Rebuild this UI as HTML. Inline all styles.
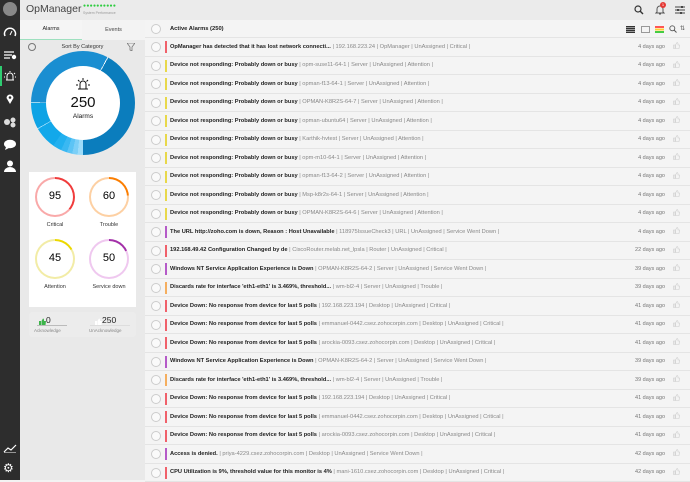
<!DOCTYPE html>
<html><head><meta charset="utf-8"><style>
*{box-sizing:border-box;margin:0;padding:0}
body{width:690px;height:480px;overflow:hidden;font-family:"Liberation Sans",sans-serif;background:#f3f3f3;position:relative}
.sb{position:absolute;left:0;top:0;width:20px;height:480px;background:#2d2d2d}
.top{position:absolute;left:20px;top:0;width:670px;height:20px;background:#ebebeb}
.lp{position:absolute;left:20px;top:20px;width:125px;height:460px;background:#e9e9e9}
.main{position:absolute;left:145px;top:20px;width:545px;height:460px;background:#f4f4f4}
.row{position:absolute;left:0;width:545px;height:18.6px;border-bottom:1px solid #e4e4e4;font-size:5.7px;color:#888}
.row .ck{position:absolute;left:6px;top:4px;width:10px;height:10px;border:1px solid #ccc;border-radius:50%;background:#fafafa}
.row .bar{position:absolute;left:20px;top:3px;width:2px;height:12px}
.row .t{position:absolute;left:25px;top:5.5px;white-space:nowrap}
.row .t b{color:#222}
.row .d{position:absolute;right:25px;top:5.5px;color:#777;font-size:5.5px}
.row .th{position:absolute;right:10px;top:4px}
.sev{position:absolute;left:9px;top:152px;width:107px;height:135px;background:#fff}
.c{position:absolute;width:40px;height:40px}
.lbl{position:absolute;font-size:5.5px;color:#333;width:60px;text-align:center}
</style></head><body>
<div class="sb">
<div style="position:absolute;left:3px;top:2px;width:14px;height:14px;border-radius:50%;background:#888"></div>
<svg style="position:absolute;left:3px;top:27px" width="14" height="10" viewBox="0 0 14 10"><path d="M2 9A5.5 5.5 0 1 1 12 9" fill="none" stroke="#fff" stroke-width="1.5"/><path d="M7 8L9 4" stroke="#fff"/></svg>
<svg style="position:absolute;left:3px;top:50px" width="14" height="10"><path d="M1 2H11M1 5H9M1 8H7" stroke="#fff" stroke-width="1.2"/><circle cx="11" cy="7" r="2.2" fill="#fff"/></svg>
<div style="position:absolute;left:0;top:66px;width:2px;height:20px;background:#2ecc71"></div>
<svg style="position:absolute;left:3px;top:70px" width="14" height="12"><path d="M4 10V6a3 3 0 0 1 6 0v4H3h8" fill="none" stroke="#fff" stroke-width="1"/><path d="M7 1V2M2 3L3 4M12 3L11 4M1 7H2M12 7H13" stroke="#fff"/></svg>
<svg style="position:absolute;left:5px;top:93px" width="10" height="12"><path d="M5 11L1.5 5A3.5 3.5 0 1 1 8.5 5Z" fill="#fff"/><circle cx="5" cy="4.5" r="1.3" fill="#2d2d2d"/></svg>
<svg style="position:absolute;left:3px;top:116px" width="14" height="12"><circle cx="4" cy="6" r="3" fill="#ddd"/><circle cx="10" cy="4" r="2.5" fill="#ddd"/><circle cx="10" cy="9" r="2.5" fill="#ddd"/></svg>
<svg style="position:absolute;left:3px;top:139px" width="14" height="11"><ellipse cx="7" cy="5" rx="6" ry="4.2" fill="#fff"/><path d="M3 8L2 11L6 9Z" fill="#fff"/></svg>
<svg style="position:absolute;left:4px;top:160px" width="12" height="12"><circle cx="6" cy="3.5" r="3" fill="#fff"/><path d="M0 12a6 5 0 0 1 12 0Z" fill="#fff"/></svg>
<svg style="position:absolute;left:3px;top:443px" width="14" height="10"><path d="M1 9L5 5L8 7L13 2" fill="none" stroke="#fff" stroke-width="1.2"/><path d="M1 10H13" stroke="#fff"/></svg>
<div style="position:absolute;left:3px;top:462px;color:#fff;font-size:12px;line-height:12px">⚙</div>
</div>
<div class="top">
<div style="position:absolute;left:6px;top:3px;font-size:10.5px;color:#444">OpManager</div>
<div style="position:absolute;left:63px;top:3px;font-size:5px;color:#2ecc40;letter-spacing:0.3px">●●●●●●●●●●</div>
<div style="position:absolute;left:63px;top:11px;font-size:3.5px;color:#999">System Performance</div>
<svg style="position:absolute;left:614px;top:5px" width="10" height="10"><circle cx="4" cy="4" r="3" fill="none" stroke="#333" stroke-width="1.2"/><path d="M6 6L9 9" stroke="#333" stroke-width="1.4"/></svg>
<svg style="position:absolute;left:635px;top:4px" width="10" height="11"><path d="M2 8V5a3 3 0 0 1 6 0v3l1 1H1Z" fill="none" stroke="#555"/><path d="M4 10H6" stroke="#555"/></svg>
<div style="position:absolute;left:640px;top:2px;width:6px;height:6px;border-radius:50%;background:#e53935;color:#fff;font-size:4px;text-align:center;line-height:6px">1</div>
<svg style="position:absolute;left:655px;top:5px" width="10" height="10"><path d="M0 2H10M0 5H10M0 8H10" stroke="#444"/><rect x="6" y="1" width="2" height="2" fill="#444"/><rect x="2" y="4" width="2" height="2" fill="#444"/><rect x="5" y="7" width="2" height="2" fill="#444"/></svg>
</div>
<div class="lp">
<div style="position:absolute;left:0;top:0;width:62px;height:20px;background:#f5f5f5;border-bottom:1.5px solid #9ee0bf;font-size:5.5px;text-align:center;line-height:19px;color:#222">Alarms</div>
<div style="position:absolute;left:62px;top:0;width:63px;height:20px;background:#f3f3f3;font-size:5.5px;text-align:center;line-height:20px;color:#444">Events</div>
<div style="position:absolute;left:8px;top:23px;width:8px;height:8px;border:1px solid #777;border-radius:50%"></div>
<div style="position:absolute;left:0;top:24px;width:125px;text-align:center;font-size:5.5px;color:#333">Sort By Category</div>
<svg style="position:absolute;left:107px;top:23px" width="8" height="8"><path d="M0 0H8L5 4V8L3 7V4Z" fill="none" stroke="#777" stroke-width=".8"/></svg>
<div style="position:absolute;left:11px;top:31px;width:104px;height:104px;border-radius:50%;background:conic-gradient(#1a8ed1 0 28deg,#fff 28deg 29deg,#0b7dbd 29deg 180deg,#9ddcfa 180deg 186deg,#7ccff7 186deg 192deg,#5cc4f5 192deg 198deg,#3ab8f2 198deg 205deg,#22b0ef 205deg 215deg,#12a8ea 215deg 240deg,#9ddcfa 240deg 241deg,#0ea3e5 241deg 270deg,#a0d8f0 270deg 271deg,#1a8ed1 271deg 360deg)"></div>
<div style="position:absolute;left:26px;top:46px;width:74px;height:74px;border-radius:50%;background:#fff"></div>
<svg style="position:absolute;left:55px;top:57px" width="16" height="14"><path d="M5 12V7a3 3 0 0 1 6 0v5M3 12H13" fill="none" stroke="#111" stroke-width="1"/><path d="M8 1V3M3 3L4.5 4.5M13 3L11.5 4.5M1 8H3M13 8H15" stroke="#111"/></svg>
<div style="position:absolute;left:26px;top:74px;width:74px;text-align:center;font-size:15px;color:#111">250</div>
<div style="position:absolute;left:26px;top:93px;width:74px;text-align:center;font-size:6.5px;color:#111">Alarms</div>
<div class="sev">
<div class="c" style="left:6px;top:5px;border-radius:50%;background:conic-gradient(#f03c3c 0 130deg,#f9a9a9 130deg)"></div><div class="c" style="left:8px;top:7px;width:36px;height:36px;border-radius:50%;background:#fff"></div>
<div style="position:absolute;left:6px;top:18px;width:40px;text-align:center;font-size:11px">95</div><div class="lbl" style="left:-4px;top:50px">Critical</div>
<div class="c" style="left:60px;top:5px;border-radius:50%;background:conic-gradient(#fb7d00 0 85deg,#fdd0a3 85deg)"></div><div class="c" style="left:62px;top:7px;width:36px;height:36px;border-radius:50%;background:#fff"></div>
<div style="position:absolute;left:60px;top:18px;width:40px;text-align:center;font-size:11px">60</div><div class="lbl" style="left:50px;top:50px">Trouble</div>
<div class="c" style="left:6px;top:67px;border-radius:50%;background:conic-gradient(#ecd800 0 60deg,#f2eca6 60deg)"></div><div class="c" style="left:8px;top:69px;width:36px;height:36px;border-radius:50%;background:#fff"></div>
<div style="position:absolute;left:6px;top:80px;width:40px;text-align:center;font-size:11px">45</div><div class="lbl" style="left:-4px;top:112px">Attention</div>
<div class="c" style="left:60px;top:67px;border-radius:50%;background:conic-gradient(#a330a8 0 65deg,#efc8ef 65deg)"></div><div class="c" style="left:62px;top:69px;width:36px;height:36px;border-radius:50%;background:#fff"></div>
<div style="position:absolute;left:60px;top:80px;width:40px;text-align:center;font-size:11px">50</div><div class="lbl" style="left:50px;top:112px">Service down</div>
</div>
<div style="position:absolute;left:9px;top:292px;width:107px;height:25px;background:#ececec;border-radius:3px"></div>
<svg style="position:absolute;left:19px;top:298px" width="7" height="7"><path d="M0 3H2V7H0ZM2.5 3L4 0.5Q5 0.5 5 2V3H7L6.5 7H2.5Z" fill="#3cb44a"/></svg>
<div style="position:absolute;left:26px;top:295px;font-size:8.5px;color:#222">0</div>
<div style="position:absolute;left:17px;top:305px;width:30px;border-top:1px solid #bbb"></div>
<div style="position:absolute;left:14px;top:308px;font-size:4.5px;color:#888">Acknowledge</div>
<svg style="position:absolute;left:75px;top:298px" width="7" height="7"><path d="M0 3H2V7H0ZM2.5 3L4 0.5Q5 0.5 5 2V3H7L6.5 7H2.5Z" fill="#fff"/></svg>
<div style="position:absolute;left:82px;top:295px;font-size:8.5px;color:#222">250</div>
<div style="position:absolute;left:70px;top:305px;width:40px;border-top:1px solid #ddd"></div>
<div style="position:absolute;left:69px;top:308px;font-size:4.5px;color:#888">UnAcknowledge</div>
</div>
<div class="main">
<div class="row" style="top:0;height:18px"><div class="ck"></div><div class="t" style="left:25px;font-size:5.8px"><b>Active Alarms (250)</b></div>
<div style="position:absolute;left:481px;top:6px;width:9px;height:7px;background:repeating-linear-gradient(#333 0 1.4px,#fff 1.4px 2px)"></div>
<div style="position:absolute;left:496px;top:6px;width:9px;height:7px;border:1px solid #999"></div>
<div style="position:absolute;left:510px;top:6px;width:9px;height:7px;background:linear-gradient(#f55 0 2px,#fff 2px 2.5px,#fc3 2.5px 4.5px,#fff 4.5px 5px,#4c4 5px)"></div>
<svg style="position:absolute;left:524px;top:5px" width="8" height="8"><circle cx="3.3" cy="3.3" r="2.5" fill="none" stroke="#555" stroke-width=".9"/><path d="M5 5L7.5 7.5" stroke="#555"/></svg>
<div style="position:absolute;left:535px;top:5px;font-size:6px;color:#555">⇅</div></div>
<div id="rows"></div>
</div>
<script>
var R="#f0606a",Y="#e8d84a",P="#b55ac8",O="#f5ae5e";
var d=[[R,"OpManager has detected that it has lost network connecti...","192.168.223.24 | OpManager | UnAssigned | Critical |","4 days ago"],
[Y,"Device not responding: Probably down or busy","opm-suse11-64-1 | Server | UnAssigned | Attention |","4 days ago"],
[Y,"Device not responding: Probably down or busy","opman-f13-64-1 | Server | UnAssigned | Attention |","4 days ago"],
[Y,"Device not responding: Probably down or busy","OPMAN-K8R2S-64-7 | Server | UnAssigned | Attention |","4 days ago"],
[Y,"Device not responding: Probably down or busy","opman-ubuntu64 | Server | UnAssigned | Attention |","4 days ago"],
[Y,"Device not responding: Probably down or busy","Karthik-hvtest | Server | UnAssigned | Attention |","4 days ago"],
[Y,"Device not responding: Probably down or busy","opm-m10-64-1 | Server | UnAssigned | Attention |","4 days ago"],
[Y,"Device not responding: Probably down or busy","opman-f13-64-2 | Server | UnAssigned | Attention |","4 days ago"],
[Y,"Device not responding: Probably down or busy","Msp-k8r2s-64-1 | Server | UnAssigned | Attention |","4 days ago"],
[Y,"Device not responding: Probably down or busy","OPMAN-K8R2S-64-6 | Server | UnAssigned | Attention |","4 days ago"],
[P,"The URL http://zoho.com is down, Reason : Host Unavailable","118975IssueCheck3 | URL | UnAssigned | Service Went Down |","4 days ago"],
[R,"192.168.49.42 Configuration Changed by de","CiscoRouter.melab.net_lpsla | Router | UnAssigned | Critical |","22 days ago"],
[P,"Windows NT Service Application Experience is Down","OPMAN-K8R2S-64-2 | Server | UnAssigned | Service Went Down |","39 days ago"],
[O,"Discards rate for interface 'eth1-eth1' is 3.469%, threshold...","wm-bl2-4 | Server | UnAssigned | Trouble |","39 days ago"],
[R,"Device Down: No response from device for last 5 polls","192.168.223.194 | Desktop | UnAssigned | Critical |","41 days ago"],
[R,"Device Down: No response from device for last 5 polls","emmanuel-0442.csez.zohocorpin.com | Desktop | UnAssigned | Critical |","41 days ago"],
[R,"Device Down: No response from device for last 5 polls","arockia-0093.csez.zohocorpin.com | Desktop | UnAssigned | Critical |","41 days ago"],
[P,"Windows NT Service Application Experience is Down","OPMAN-K8R2S-64-2 | Server | UnAssigned | Service Went Down |","39 days ago"],
[O,"Discards rate for interface 'eth1-eth1' is 3.469%, threshold...","wm-bl2-4 | Server | UnAssigned | Trouble |","39 days ago"],
[R,"Device Down: No response from device for last 5 polls","192.168.223.194 | Desktop | UnAssigned | Critical |","41 days ago"],
[R,"Device Down: No response from device for last 5 polls","emmanuel-0442.csez.zohocorpin.com | Desktop | UnAssigned | Critical |","41 days ago"],
[R,"Device Down: No response from device for last 5 polls","arockia-0093.csez.zohocorpin.com | Desktop | UnAssigned | Critical |","41 days ago"],
[P,"Access is denied.","priya-4229.csez.zohocorpin.com | Desktop | UnAssigned | Service Went Down |","42 days ago"],
[R,"CPU Utilization is 9%, threshold value for this monitor is 4%","mani-1610.csez.zohocorpin.com | Desktop | UnAssigned | Critical |","42 days ago"]];
var th='<svg width="7" height="7"><path d="M0.5 3H2V6.5H0.5ZM2.5 3L4 0.5Q5 0.5 5 2V3H6.5L6 6.5H2.5Z" fill="none" stroke="#ccc" stroke-width=".6"/></svg>';
var h="";d.forEach(function(r,i){h+='<div class="row" style="top:'+(18+i*18.5)+'px"><div class="ck"></div><div class="bar" style="background:'+r[0]+'"></div><div class="t"><b>'+r[1]+'</b> | '+r[2]+'</div><div class="d">'+r[3]+'</div><div class="th">'+th+'</div></div>';});
document.getElementById("rows").outerHTML=h;
</script>
</body></html>
